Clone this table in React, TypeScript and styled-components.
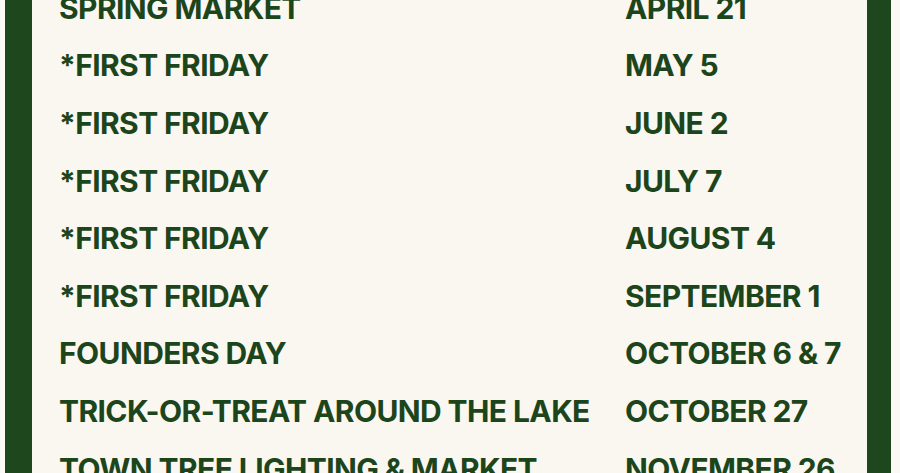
import { createGlobalStyle } from 'styled-components';
import styled from 'styled-components';

const GlobalStyle = createGlobalStyle`
  html, body {
    margin: 0;
    padding: 0;
    background: #fbf9f4;
    overflow: hidden;
  }
`;

const Page = styled.div`
  height: 473px;
  overflow: hidden;
  padding-left: 5px;
  display: flex;
`;

const Frame = styled.div`
  width: 886px;
  height: 100%;
  box-sizing: border-box;
  background: #faf7f0;
  border-left: 27px solid #1f471d;
  border-right: 24px solid #1f471d;
  padding-left: 27px;
  overflow: hidden;
`;

const Schedule = styled.div`
  margin-top: -21px;
  display: grid;
  grid-template-columns: 566px auto;
  grid-auto-rows: 57.6px;
  align-items: center;
`;

const Cell = styled.div`
  font-family: Inter, 'Liberation Sans', sans-serif;
  font-weight: 700;
  font-size: 30px;
  letter-spacing: -0.6px;
  color: #1d451c;
  white-space: nowrap;
  line-height: 1;
`;

const events: [string, string][] = [
  ['SPRING MARKET', 'APRIL 21'],
  ['*FIRST FRIDAY', 'MAY 5'],
  ['*FIRST FRIDAY', 'JUNE 2'],
  ['*FIRST FRIDAY', 'JULY 7'],
  ['*FIRST FRIDAY', 'AUGUST 4'],
  ['*FIRST FRIDAY', 'SEPTEMBER 1'],
  ['FOUNDERS DAY', 'OCTOBER 6 & 7'],
  ['TRICK-OR-TREAT AROUND THE LAKE', 'OCTOBER 27'],
  ['TOWN TREE LIGHTING & MARKET', 'NOVEMBER 26'],
];

export default function App() {
  return (
    <>
      <GlobalStyle />
      <Page>
        <Frame>
          <Schedule>
            {events.map(([name, date], i) => (
              <>
                <Cell key={`n${i}`}>{name}</Cell>
                <Cell key={`d${i}`}>{date}</Cell>
              </>
            ))}
          </Schedule>
        </Frame>
      </Page>
    </>
  );
}
